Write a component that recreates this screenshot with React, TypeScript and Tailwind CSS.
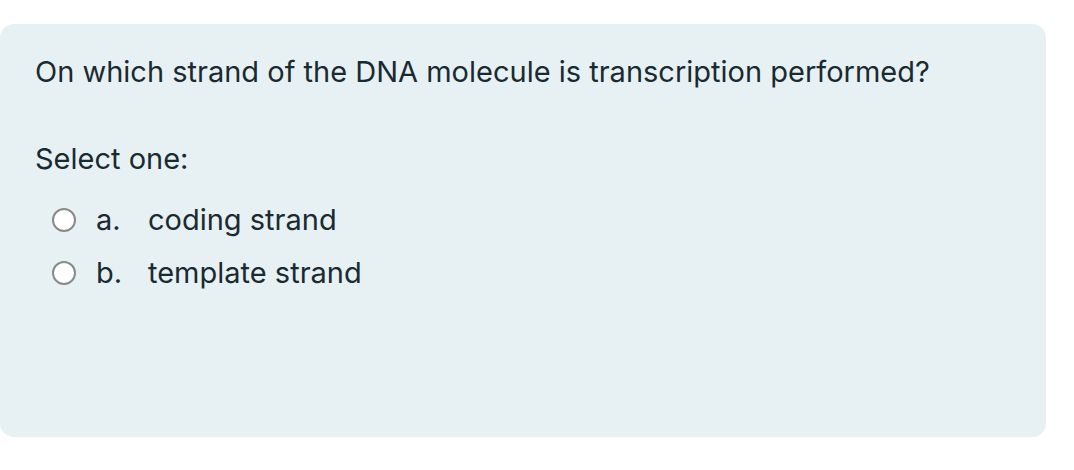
import React from 'react';

const options = [
  { key: 'a.', label: 'coding strand' },
  { key: 'b.', label: 'template strand' },
];

export default function App() {
  return (
    <div className="w-[1074px] h-[470px] bg-white pt-6 pr-7" style={{ fontFamily: 'Inter, "Liberation Sans", sans-serif' }}>
      <div className="h-[413px] rounded-[14px] bg-[#e7f1f4] pl-[35px] pt-[30px] text-[#1a2a31]">
        <p className="text-[29px] leading-[36px]">On which strand of the DNA molecule is transcription performed?</p>
        <p className="mt-[51px] text-[29px] leading-[36px]">Select one:</p>
        <div className="mt-[25px] flex flex-col gap-[17px] pl-[17px]">
          {options.map((o) => (
            <label key={o.key} className="flex items-center text-[29px] leading-[36px]">
              <span className="w-[24px] h-[24px] rounded-full border-2 border-[#8a8a8a] bg-white" />
              <span className="ml-[20px] w-[52px]">{o.key}</span>
              <span>{o.label}</span>
            </label>
          ))}
        </div>
      </div>
    </div>
  );
}
